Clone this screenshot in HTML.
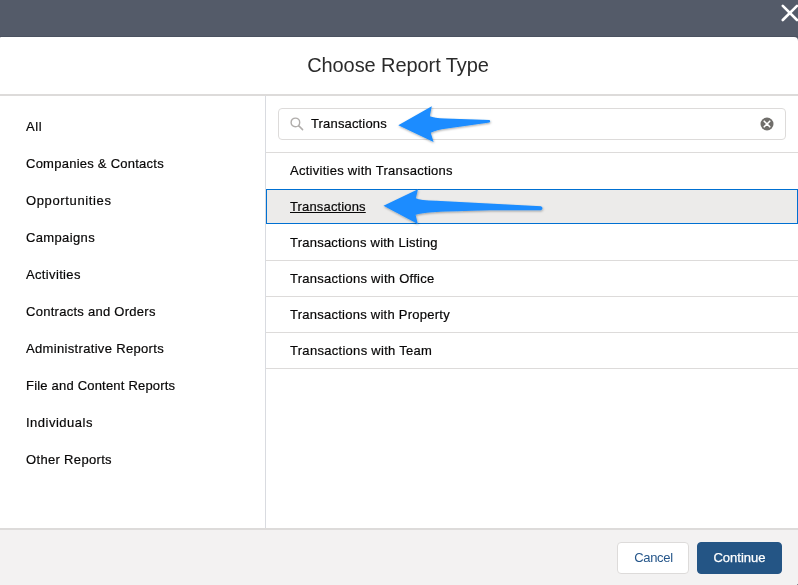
<!DOCTYPE html>
<html><head><meta charset="utf-8">
<style>
*{box-sizing:border-box;margin:0;padding:0}
html,body{width:798px;height:585px;overflow:hidden;background:#545b69;font-family:"Liberation Sans",sans-serif;color:#080707}
.abs{position:absolute;will-change:transform}
#hdrline{left:0;top:36px;width:798px;height:1px;background:#4b5260}
#modal{left:0;top:37px;width:798px;height:548px;background:#fff;border-radius:1px 4px 0 0;overflow:hidden}
#title{left:-1px;top:52px;width:798px;text-align:center;font-size:20px;line-height:26px;color:#2b2b2b;letter-spacing:-0.08px}
#hline{left:0;top:94px;width:798px;height:2px;background:#dddbda}
#vline{left:265px;top:96px;width:1px;height:432px;background:#d9dbe0}
#fline{left:0;top:528px;width:798px;height:2px;background:#dddbda}
#footer{left:0;top:530px;width:798px;height:55px;background:#f3f2f2}
.nav{left:26px;font-size:13px;line-height:16px;white-space:nowrap;-webkit-text-stroke:0.2px #080707}
#search{left:278px;top:108px;width:508px;height:32px;border:1px solid #dddbda;border-radius:4px;background:#fff}
#stext{left:311px;top:116px;font-size:13px;line-height:16px;letter-spacing:0.16px;-webkit-text-stroke:0.2px #080707}
.row{left:266px;width:532px;height:36px;border-bottom:1px solid #dddbda}
.rtext{left:290px;font-size:13px;line-height:16px;white-space:nowrap;-webkit-text-stroke:0.2px #080707}
#sel{left:266px;top:189px;width:532px;height:35px;border:1px solid #0070d2;background:#ecebea}
.btn{top:542px;height:32px;border-radius:4px;font-size:13px;line-height:30px;text-align:center}
#cancel{left:617px;padding-left:1px;width:72px;letter-spacing:-0.35px;background:#fff;border:1px solid #dddbda;color:#25568a}
#cont{left:697px;width:85px;background:#245585;border:1px solid #245585;color:#fff;-webkit-text-stroke:0.25px #fff}
</style></head>
<body>
<div class="abs" id="hdrline"></div>
<svg class="abs" style="left:774px;top:0" width="24" height="24" viewBox="0 0 24 24"><path d="M8.8 5.8 L23 20 M8.8 20 L23 5.8" stroke="#fff" stroke-width="2.6" stroke-linecap="round" fill="none"/></svg>
<div class="abs" id="modal"></div>
<div class="abs" id="title">Choose Report Type</div>
<div class="abs" id="hline"></div>
<div class="abs" id="vline"></div>
<div class="abs nav" style="top:119px;letter-spacing:0.6px">All</div>
<div class="abs nav" style="top:156px;letter-spacing:0.25px">Companies &amp; Contacts</div>
<div class="abs nav" style="top:193px;letter-spacing:0.63px">Opportunities</div>
<div class="abs nav" style="top:230px;letter-spacing:0.36px">Campaigns</div>
<div class="abs nav" style="top:267px;letter-spacing:0.35px">Activities</div>
<div class="abs nav" style="top:304px;letter-spacing:0.27px">Contracts and Orders</div>
<div class="abs nav" style="top:341px;letter-spacing:0.33px">Administrative Reports</div>
<div class="abs nav" style="top:378px;letter-spacing:0.2px">File and Content Reports</div>
<div class="abs nav" style="top:415px;letter-spacing:0.5px">Individuals</div>
<div class="abs nav" style="top:452px;letter-spacing:0.33px">Other Reports</div>

<div class="abs" id="search"></div>
<svg class="abs" style="left:288px;top:115px" width="18" height="18" viewBox="0 0 18 18"><circle cx="7.4" cy="7.4" r="4.3" stroke="#b0adab" stroke-width="1.4" fill="none"/><path d="M10.6 10.6 L14.6 14.6" stroke="#b0adab" stroke-width="1.5" stroke-linecap="round"/></svg>
<div class="abs" id="stext">Transactions</div>
<svg class="abs" style="left:759px;top:116px" width="16" height="16" viewBox="0 0 16 16"><circle cx="8" cy="8" r="6.5" fill="#706e6b"/><path d="M5.2 5.2 L10.8 10.8 M5.2 10.8 L10.8 5.2" stroke="#fff" stroke-width="1.6" stroke-linecap="round"/></svg>

<div class="abs" style="left:266px;top:152px;width:532px;height:1px;background:#dddbda"></div>
<div class="abs" id="sel"></div>
<div class="abs" style="left:266px;top:260px;width:532px;height:1px;background:#dddbda"></div>
<div class="abs" style="left:266px;top:296px;width:532px;height:1px;background:#dddbda"></div>
<div class="abs" style="left:266px;top:332px;width:532px;height:1px;background:#dddbda"></div>
<div class="abs" style="left:266px;top:368px;width:532px;height:1px;background:#dddbda"></div>
<div class="abs rtext" style="top:163px;letter-spacing:0.27px">Activities with Transactions</div>
<div class="abs rtext" style="top:199px;letter-spacing:0.15px;text-decoration:underline">Transactions</div>
<div class="abs rtext" style="top:235px;letter-spacing:0.23px">Transactions with Listing</div>
<div class="abs rtext" style="top:271px;letter-spacing:0.27px">Transactions with Office</div>
<div class="abs rtext" style="top:307px;letter-spacing:0.25px">Transactions with Property</div>
<div class="abs rtext" style="top:343px;letter-spacing:0.29px">Transactions with Team</div>

<div class="abs" id="fline"></div>
<div class="abs" id="footer"></div>
<div class="abs" style="left:797px;top:584px;width:1px;height:1px;background:#8a8e95"></div>
<div class="abs btn" id="cancel">Cancel</div>
<div class="abs btn" id="cont">Continue</div>

<svg class="abs" style="left:0;top:0" width="798" height="585" viewBox="0 0 798 585">
<defs><filter id="sh" x="-10%" y="-30%" width="120%" height="160%"><feDropShadow dx="0.5" dy="1" stdDeviation="0.8" flood-color="#000" flood-opacity="0.35"/></filter></defs>
<path filter="url(#sh)" fill="#1a8cff" d="M398.3 125.2 L431.8 106.3 L429.8 116.2 Q434 118 445 118.4 L489.5 120.1 Q491 121.3 489.5 122.6 L447 128.6 Q436 130.2 430.7 132.8 L433.6 142 Z"/>
<path filter="url(#sh)" fill="#1a8cff" d="M383.5 205.8 L418 189.3 L415.8 198.2 Q420 200.2 436 200.8 L541 206.3 Q544 208.2 541 210.2 L490 210.3 Q450 211.2 436 212 Q420 213 415.6 214.8 L417.8 224 Z"/>
</svg>
</body></html>
